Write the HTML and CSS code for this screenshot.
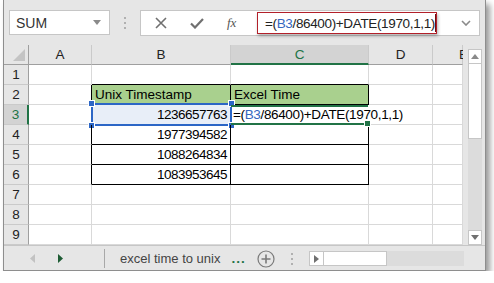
FILE: index.html
```html
<!DOCTYPE html>
<html lang="en">
<head>
  <meta charset="UTF-8">
  <title>Unix Timestamp to Excel Time</title>
  <link rel="stylesheet" href="styles.css">
</head>
<body>
  <div class="window">
    <!-- name box and formula bar -->
    <div class="toolbar">
      <div class="namebox">
        <span>SUM</span>
        <svg class="caret" width="8" height="5" viewBox="0 0 8 5"><path d="M0 0h8L4 5z" fill="#8a8a8a"/></svg>
      </div>
      <div class="grip"><i></i><i></i><i></i></div>
      <div class="formulabar">
        <div class="fbuttons">
          <svg width="12" height="12" viewBox="0 0 12 12"><path d="M1 1l10 10M11 1L1 11" stroke="#707070" stroke-width="1.6"/></svg>
          <svg width="14" height="12" viewBox="0 0 14 12"><path d="M1 6.5l4 4L13 2" stroke="#707070" stroke-width="2.2" fill="none"/></svg>
          <span class="fx">fx</span>
        </div>
        <div class="formula"><span class="ftext">=(<span class="ref">B3</span>/86400)+DATE(1970,1,1)</span><span class="cursor"></span></div>
        <svg class="chevron" width="10" height="6" viewBox="0 0 10 6"><path d="M1 1l4 4 4-4" stroke="#8a8a8a" stroke-width="1.6" fill="none"/></svg>
      </div>
    </div>

    <div class="sheet">
      <div class="grid">
        <div class="hd corner"><span class="tri"></span></div>
        <div class="hd">A</div>
        <div class="hd">B</div>
        <div class="hd active-col">C</div>
        <div class="hd">D</div>
        <div class="hd cut">E</div>

        <div class="rh">1</div>
        <div class="c"></div>
        <div class="c above"></div>
        <div class="c above"></div>
        <div class="c"></div>
        <div class="c"></div>

        <div class="rh">2</div>
        <div class="c left-of"></div>
        <div class="c tbl head">Unix Timestamp</div>
        <div class="c tbl head">Excel Time</div>
        <div class="c"></div>
        <div class="c"></div>

        <div class="rh active-row">3</div>
        <div class="c left-of"></div>
        <div class="c tbl num selected">1236657763<span class="sel"><b class="h tl"></b><b class="h tr"></b><b class="h bl"></b><b class="h br"></b></span></div>
        <div class="c tbl editing"><span class="ftext">=(<span class="ref">B3</span>/86400)+DATE(1970,1,1)</span><b class="gh"></b></div>
        <div class="c"></div>
        <div class="c"></div>

        <div class="rh">4</div>
        <div class="c left-of"></div>
        <div class="c tbl num">1977394582</div>
        <div class="c tbl"></div>
        <div class="c"></div>
        <div class="c"></div>

        <div class="rh">5</div>
        <div class="c left-of"></div>
        <div class="c tbl num">1088264834</div>
        <div class="c tbl"></div>
        <div class="c"></div>
        <div class="c"></div>

        <div class="rh">6</div>
        <div class="c left-of"></div>
        <div class="c tbl num">1083953645</div>
        <div class="c tbl"></div>
        <div class="c"></div>
        <div class="c"></div>

        <div class="rh">7</div>
        <div class="c"></div>
        <div class="c"></div>
        <div class="c"></div>
        <div class="c"></div>
        <div class="c"></div>

        <div class="rh">8</div>
        <div class="c"></div>
        <div class="c"></div>
        <div class="c"></div>
        <div class="c"></div>
        <div class="c"></div>

        <div class="rh">9</div>
        <div class="c"></div>
        <div class="c"></div>
        <div class="c"></div>
        <div class="c"></div>
        <div class="c"></div>
      </div>

      <div class="vscroll">
        <div class="sbtn"><svg width="8" height="5" viewBox="0 0 8 5"><path d="M0 5h8L4 0z" fill="#8a8a8a"/></svg></div>
        <div class="vthumb"></div>
        <div class="vtrack"></div>
        <div class="sbtn"><svg width="8" height="5" viewBox="0 0 8 5"><path d="M0 0h8L4 5z" fill="#707070"/></svg></div>
      </div>
    </div>

    <!-- sheet tabs and horizontal scroll -->
    <div class="tabs">
      <svg class="nav prev" width="5" height="9" viewBox="0 0 5 9"><path d="M5 0v9L0 4.5z" fill="#c2c2c2"/></svg>
      <svg class="nav next" width="5" height="9" viewBox="0 0 5 9"><path d="M0 0v9l5-4.5z" fill="#1e5c34"/></svg>
      <span class="vline"></span>
      <span class="tabname">excel time to unix</span>
      <span class="more">...</span>
      <svg class="add" width="18" height="18" viewBox="0 0 18 18"><circle cx="9" cy="9" r="8" fill="none" stroke="#7a7a7a" stroke-width="1.2"/><path d="M9 4.5v9M4.5 9h9" stroke="#7a7a7a" stroke-width="1.6"/></svg>
      <div class="grip small"><i></i><i></i><i></i></div>
      <div class="hscroll">
        <div class="sbtn h"><svg width="5" height="8" viewBox="0 0 5 8"><path d="M5 0v8L0 4z" fill="#707070"/></svg></div>
        <div class="hthumb"></div>
        <div class="htrack"></div>
        <div class="sbtn h"><svg width="5" height="8" viewBox="0 0 5 8"><path d="M0 0v8l5-4z" fill="#707070"/></svg></div>
      </div>
    </div>
  </div>
</body>
</html>
```

FILE: styles.css
```css
body {
  margin: 0;
  background: #fff;
  font-family: "Liberation Sans", Arial, sans-serif;
  font-size: 13.5px;
  color: #000;
}
.window {
  margin-left: 3px;
  width: 483px;
  height: 271px;
  box-sizing: border-box;
  border: 1px solid #8e8e8e;
  border-top: none;
  background: #e6e6e6;
  box-shadow: 4px 4px 6px rgba(0, 0, 0, 0.4);
  display: flex;
  flex-direction: column;
}
.toolbar {
  height: 45px;
  flex: none;
  display: flex;
  align-items: flex-start;
  padding: 10px 0 0 5px;
  box-sizing: border-box;
}
.namebox {
  width: 101px;
  height: 25px;
  box-sizing: border-box;
  background: #fff;
  border: 1px solid #c6c6c6;
  display: flex;
  align-items: center;
  justify-content: space-between;
  padding: 0 8px 0 6px;
  font-size: 14px;
  color: #333;
}
.grip {
  width: 30px;
  height: 25px;
  flex: none;
  display: flex;
  flex-direction: column;
  align-items: center;
  justify-content: center;
  gap: 3px;
}
.grip i {
  width: 2px;
  height: 2px;
  background: #b0b0b0;
}
.formulabar {
  width: 340px;
  height: 26px;
  box-sizing: border-box;
  background: #fff;
  border: 1px solid #c6c6c6;
  display: flex;
  align-items: center;
}
.fbuttons {
  width: 116px;
  flex: none;
  display: flex;
  align-items: center;
  gap: 23px;
  padding-left: 14px;
  box-sizing: border-box;
}
.fx {
  font-family: "Liberation Serif", serif;
  font-style: italic;
  font-size: 13px;
  color: #555;
}
.formula {
  height: 22px;
  width: 180px;
  flex: none;
  box-sizing: border-box;
  border: 1.5px solid #b2202a;
  box-shadow: 1px 2px 3px rgba(0, 0, 0, 0.3);
  display: flex;
  align-items: center;
  padding-left: 7px;
  color: #222;
  white-space: nowrap;
}
.ftext {
  letter-spacing: -0.35px;
}
.cursor {
  width: 2px;
  height: 18px;
  background: #6e0c12;
  margin-left: auto;
}
.ref {
  color: #3467c0;
}
.chevron {
  margin-left: auto;
  margin-right: 8px;
}
.sheet {
  flex: none;
  height: 200px;
  display: flex;
}
.grid {
  width: 459px;
  display: grid;
  grid-template-columns: 25px 63px 139px 138px 64px 30px;
  grid-template-rows: repeat(10, 20px);
  background: #fff;
  overflow: hidden;
}
.grid > div {
  box-sizing: border-box;
  border-right: 1px solid #d9d9d9;
  border-bottom: 1px solid #d9d9d9;
  white-space: nowrap;
  line-height: 19px;
  position: relative;
}
.hd {
  background: #e6e6e6;
  text-align: center;
  color: #222;
  border-right-color: #cacaca !important;
  border-bottom-color: #9f9f9f !important;
}
.hd.cut {
  text-align: left;
  padding-left: 26px;
}
.corner {
  border-right-color: #9f9f9f !important;
}
.tri {
  position: absolute;
  right: 3px;
  bottom: 3px;
  width: 0;
  height: 0;
  border-left: 12px solid transparent;
  border-bottom: 12px solid #c4c4c4;
}
.active-col {
  background: #d3d3d3;
  color: #217346;
  border-bottom: 2px solid #217346 !important;
}
.rh {
  background: #e6e6e6;
  text-align: center;
  color: #222;
  border-right-color: #9f9f9f !important;
  border-bottom-color: #cacaca !important;
}
.active-row {
  background: #d3d3d3;
  color: #217346;
  border-right: 2px solid #217346 !important;
}
.c {
  padding: 0 3px;
}
.above {
  border-bottom-color: #000 !important;
}
.left-of {
  border-right-color: #000 !important;
}
.tbl {
  border-right-color: #000 !important;
  border-bottom-color: #000 !important;
}
.head {
  background: #a9d08e;
}
.num {
  text-align: right;
  letter-spacing: -0.5px;
}
.selected {
  background: #e8eef8;
}
.sel {
  position: absolute;
  left: -1px;
  top: -2px;
  right: -2px;
  bottom: -2px;
  border: 2px solid #2c66c6;
}
.h {
  position: absolute;
  width: 5px;
  height: 5px;
  background: #2c66c6;
  border: 1px solid #fff;
}
.tl { left: -5px; top: -5px; }
.tr { right: -5px; top: -5px; }
.bl { left: -5px; bottom: -5px; }
.br { right: -5px; bottom: -5px; }
.editing {
  overflow: visible;
  z-index: 2;
  border-right-color: transparent !important;
  border-bottom: 2px solid #217346 !important;
  box-shadow: inset 0 2px 0 #217346;
  padding-left: 2px;
}
.gh {
  position: absolute;
  right: -3px;
  bottom: -4px;
  width: 5px;
  height: 5px;
  background: #217346;
  border: 1px solid #fff;
}
.vscroll {
  width: 22px;
  display: flex;
  flex-direction: column;
  padding: 4px 3px 0 5px;
  box-sizing: border-box;
}
.sbtn {
  height: 15px;
  flex: none;
  box-sizing: border-box;
  background: #fff;
  border: 1px solid #c6c6c6;
  display: flex;
  align-items: center;
  justify-content: center;
}
.vthumb {
  height: 74px;
  background: #fff;
  border: 1px solid #c6c6c6;
  border-top: none;
}
.vtrack {
  flex: 1;
  background: #dcdcdc;
}
.tabs {
  flex: 1;
  border-top: 1px solid #c6c6c6;
  display: flex;
  align-items: center;
  color: #444;
}
.tabs > * {
  flex: none;
}
.nav.prev {
  margin-left: 26px;
}
.nav.next {
  margin-left: 23px;
}
.vline {
  width: 1px;
  height: 19px;
  background: #a8a8a8;
  margin-left: 41px;
}
.tabname {
  margin-left: 15px;
  font-size: 13px;
}
.more {
  margin-left: 11px;
  color: #217346;
  font-weight: bold;
  letter-spacing: 1px;
}
.add {
  margin-left: 11px;
}
.grip.small {
  width: 34px;
}
.hscroll {
  width: 155px;
  height: 15px;
  display: flex;
}
.sbtn.h {
  width: 15px;
}
.hthumb {
  width: 78px;
  flex: none;
  background: #fff;
  border: 1px solid #c6c6c6;
  border-left: none;
  box-sizing: border-box;
}
.htrack {
  flex: 1;
  background: #dcdcdc;
}
```
